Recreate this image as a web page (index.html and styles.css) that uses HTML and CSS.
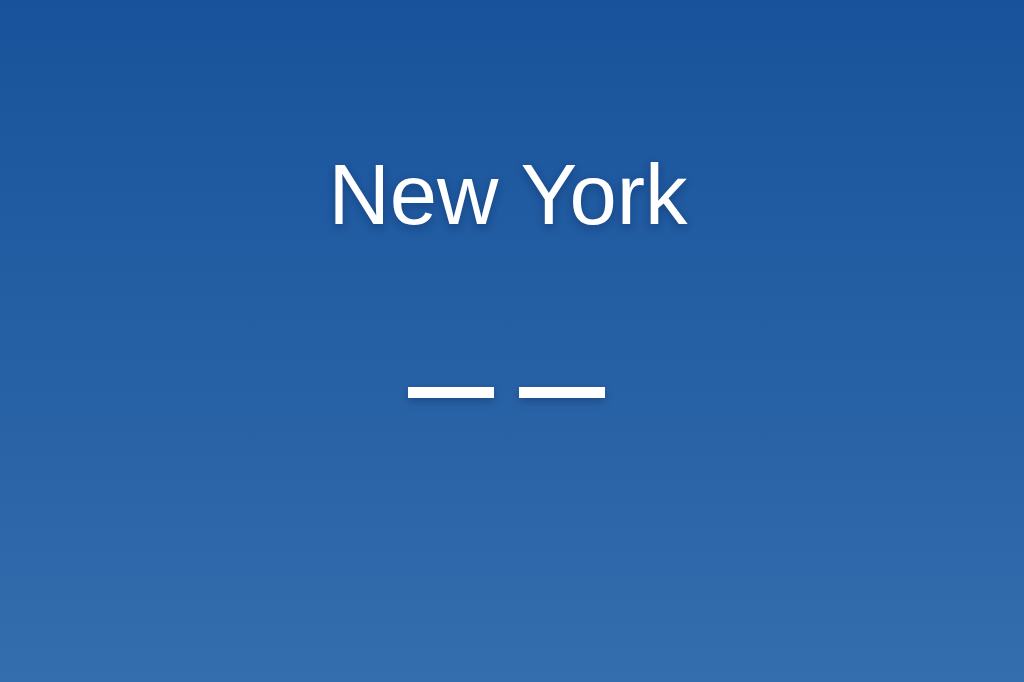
FILE: index.html
```html
<!DOCTYPE html>
<html lang="en">
<head>
    <meta charset="UTF-8">
    <meta name="viewport" content="width=device-width, initial-scale=1.0">
    <title>Weather</title>
    <link rel="stylesheet" href="styles.css">
</head>
<body>
    <div class="weather">
        <h1 class="city">New York</h1>
        <div class="temp" aria-label="No temperature">
            <span class="dash"></span>
            <span class="dash"></span>
        </div>
    </div>
</body>
</html>
```

FILE: styles.css
```css
html, body {
    height: 100%;
}
body {
    margin: 0;
    padding: 0;
    font-family: "Liberation Sans", Arial, sans-serif;
    background: linear-gradient(to bottom, #18529a 0%, #245ea3 45%, #346eae 100%);
    color: white;
}
.weather {
    display: flex;
    flex-direction: column;
    align-items: center;
    padding-top: 152px;
    padding-right: 8px;
}
.city {
    margin: 0;
    font-size: 85px;
    font-weight: 400;
    line-height: 1;
    text-shadow: 0 3px 8px rgba(0, 20, 60, 0.3);
}
.temp {
    display: flex;
    gap: 25px;
    margin-top: 150px;
    padding-right: 3px;
}
.dash {
    width: 86px;
    height: 11px;
    background-color: white;
    box-shadow: 0 3px 8px rgba(0, 20, 60, 0.3);
}
```
